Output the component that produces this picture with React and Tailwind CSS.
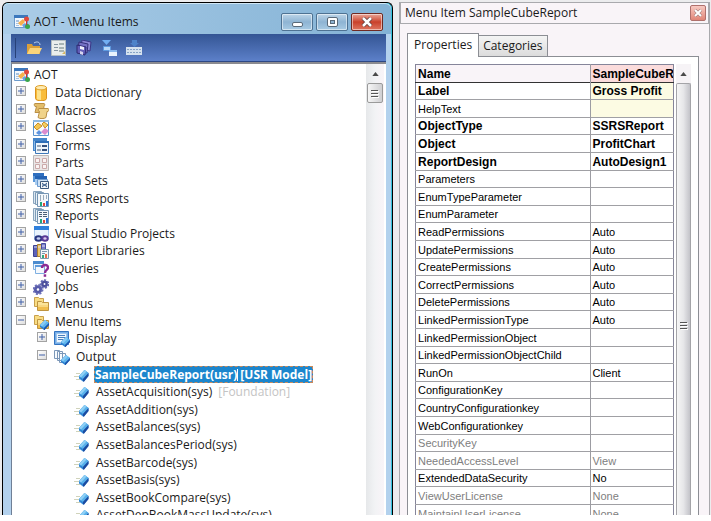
import React, { useState } from "react";

const paper = (
    <g>
        <path d="M0.500 0.500h8v12h-8z" fill="#dbe6f0" stroke="#8aa5be" />
        <path d="M2.500 1.500h8v12h-8z" fill="#e8f0f6" stroke="#7f9db8" />
        <path d="M4.500 2.500h11v13h-11z" fill="#f4f8fb" stroke="#7595b4" />
    </g>
);

const bars = (
    <g>
        <path d="M7 11h2v4H7z" fill="#21a57c" />
        <path d="M10 12h2v3h-2z" fill="#e2453c" />
        <path d="M13 10h2v5h-2z" fill="#2c74d6" />
    </g>
);

const diamond = (
    <g>
        <path d="M12 6l4 3v2l-4.500 5H11l-4-3v-2z" fill="#2b80d0" />
        <path d="M12 6l4 3-5 5-4-3z" fill="#5db4ec" />
        <path d="M12 6l2 1.500L9 12.500 7 11z" fill="#86caf5" />
        <path d="M16 9v2l-4.500 5H11v-2z" fill="#1d55ac" />
    </g>
);

const folder = (
    <g>
        <path d="M1.500 1.500h4l1 1h4v8h-9z" fill="#f8dc83" stroke="#c9a04c" />
        <path d="M4.500 5.500h4l1 1h6v8h-11z" fill="#fbe49a" stroke="#bf9440" />
        <path d="M5 9h10v5H5z" fill="#f0bd4d" />
        <path d="M5 9h10v2H5z" fill="#f8d780" />
    </g>
);

const icons = {
    aot: (
        <g>
            <path d="M0.500 1.500h13v12h-13z" fill="#f3f8fd" stroke="#6c9bcb" />
            <path d="M0 1h14v3H0z" fill="#3c78bd" />
            <path d="M2 6h3v2H2zM2 9h3v1H2zM2 11h3v1H2z" fill="#a7c3e0" />
            <path d="M4 9l5-4 2 3-4 4z" fill="#f5b04c" />
            <circle cx="12.500" cy="5" r="2.500" fill="#e0483a" />
            <path d="M8 11l3-2 2 2-3 3z" fill="#6c9fe0" />
            <circle cx="13.500" cy="12.500" r="2.500" fill="#3aa54b" />
            <path d="M12 7h1v4h-1z" fill="#cf3830" />
        </g>
    ),
    dictionary: (
        <g>
            <path d="M2.500 2.500v11c0 3 11 3 11 0v-11z" fill="#f9bd3c" stroke="#dc941c" />
            <path d="M4 4h4v11c-3 0-4-1-4-1z" fill="#fde28c" />
            <ellipse cx="8" cy="2.700" rx="5.500" ry="2.200" fill="#fdeab0" stroke="#dfa02a" />
        </g>
    ),
    macros: (
        <g stroke="#b98f45">
            <path d="M2 0.500h9c1 0 1 2 0 3l-1 6H2l1.500-6H2c-1-1-1-3 0-3z" fill="#e3bd6a" />
            <path d="M6 5.500h9c1 0 1 2 0 3h-1l-1 6c-2 1.500-6 1.500-8 0l1.500-6H6c-1-1-1-3 0-3z" fill="#f0d38a" />
        </g>
    ),
    classes: (
        <g>
            <path d="M0.500 0.500h15v15h-15z" fill="#f7fafd" stroke="#5c94cf" />
            <path d="M0 0h16v2H0z" fill="#8fb9e2" />
            <path d="M1 7l4-4 4 3-5 4z" fill="#f4c654" stroke="#c98f24" />
            <path d="M9 4l2-2 4 3-3 3z" fill="#f6cf62" stroke="#c98f24" />
            <path d="M8 12l4-4 4 3-4 4z" fill="#dc8ccf" />
            <path d="M3 13l3-3 3 3-3 2z" fill="#5c93e0" />
        </g>
    ),
    forms: (
        <g>
            <path d="M0 0h14v13H0z" fill="#4585ca" />
            <path d="M1 3h2v9H1z" fill="#8fbbe8" />
            <path d="M2.500 3.500h13v12h-13z" fill="#eff5fb" stroke="#3e78b8" />
            <path d="M2 3h14v2H2z" fill="#2f6fb8" />
            <path d="M4 7h4v2H4zM4 11h4v2H4z" fill="#98a6b8" />
            <path d="M9 7h5v2H9zM9 11h5v2H9z" fill="#34507c" />
        </g>
    ),
    parts: (
        <g>
            <path d="M0.500 0.500h15v15h-15z" fill="#e9e6e6" stroke="#bcb8b8" />
            <path d="M2.500 3.500h4v4h-4zM9.500 3.500h4v4h-4zM2.500 9.500h4v4h-4zM9.500 9.500h4v4h-4z" fill="#faf4f4" stroke="#cba9a9" />
        </g>
    ),
    datasets: (
        <g>
            <path d="M0 0h11v9H0z" fill="#5b97d8" />
            <path d="M0 0h11v3H0z" fill="#2f6fc0" />
            <path d="M2 3h12v9H2z" fill="#a8ccf0" />
            <path d="M2 3h12v3H2z" fill="#2463b4" />
            <path d="M4.500 6.500h10v7h-10z" fill="#cfe2f5" stroke="#6c9bd0" />
            <path d="M7.500 8.500h8v7h-8z" fill="#f5f8fa" stroke="#3d5a7d" />
            <path d="M9 10l5 4M14 10l-5 4M9 12h5" stroke="#3a5f8c" />
        </g>
    ),
    ssrs: (
        <g>
            {paper}
            <path d="M7.500 4v6M10.500 4v5M13.500 4v4" stroke="#9aabbc" />
            {bars}
        </g>
    ),
    reports: (
        <g>
            {paper}
            <path d="M6 4.500h3M10 4.500h4M6 6.500h3M10 6.500h4M6 8.500h3M10 8.500h4" stroke="#4b5e75" />
            {bars}
        </g>
    ),
    visualstudio: (
        <g>
            <path d="M1.500 0.500h14v13h-14z" fill="#e9f3fc" stroke="#a9c8ea" />
            <path d="M1 0h15v4H1z" fill="#2f80dc" />
            <ellipse cx="5.500" cy="12.500" rx="3" ry="2.200" fill="#c5cff0" stroke="#27357f" strokeWidth="2" />
            <ellipse cx="12" cy="12.500" rx="2.700" ry="2.200" fill="#d9c9ee" stroke="#583a96" strokeWidth="2" />
        </g>
    ),
    libraries: (
        <g>
            <path d="M0.500 2.500h4v11h-4z" fill="#5d62b8" stroke="#3c4292" />
            <path d="M4.500 1.500h4v12h-4z" fill="#ecc469" stroke="#a97f30" />
            <path d="M8.500 0.500h4v13h-4z" fill="#7a7fc6" stroke="#474da0" />
            <path d="M1 4h3M5 4h3M9 3h3" stroke="#dcdcf4" />
            <path d="M7.500 6.500h8v9h-8z" fill="#f0f5f8" stroke="#7b99ad" />
            <path d="M9 8.500h5M9 10.500h3" stroke="#7d93ad" />
            <path d="M9 12h2v3H9z" fill="#2fa87a" />
            <path d="M12 11h2v4h-2z" fill="#e5704c" />
        </g>
    ),
    queries: (
        <g>
            <path d="M0.500 0.500h10v8h-10z" fill="#eef5fc" stroke="#7fb0e2" />
            <path d="M0 0h11v3H0z" fill="#4c8ccf" />
            <path d="M2.500 4.500h9v8h-9z" fill="#f5f9fd" stroke="#7fb0e2" />
            <path d="M2 4h7v2H2z" fill="#5f9cdc" />
            <path d="M9 7c0-4 6-4 6-0.500 0 2.500-3 2.500-3 5.500" fill="none" stroke="#8c2c94" strokeWidth="2.400" />
            <path d="M10.700 13.300h2.500v2.500h-2.500z" fill="#8c2c94" />
        </g>
    ),
    jobs: (
        <g fill="none">
            <circle cx="5" cy="10.500" r="2.800" stroke="#575baa" strokeWidth="3" />
            <circle cx="5" cy="10.500" r="4.500" stroke="#6d71b9" strokeWidth="2" strokeDasharray="2 1.500" />
            <circle cx="11.500" cy="5" r="2.200" stroke="#4c509c" strokeWidth="2.500" />
            <circle cx="11.500" cy="5" r="3.800" stroke="#6468b2" strokeWidth="2" strokeDasharray="2 1.400" />
        </g>
    ),
    menus: folder,
    menuitems: (
        <g>
            {folder}
            {diamond}
        </g>
    ),
    display: (
        <g>
            <path d="M0.500 0.500h14v13h-14z" fill="#72ace6" stroke="#3373c0" />
            <path d="M2.500 2.500h10v9h-10z" fill="#eef6fd" stroke="#9cc3ec" />
            <path d="M4 4.500h7M4 6.500h7M4 8.500h5" stroke="#4a80bd" />
            {diamond}
        </g>
    ),
    output: (
        <g>
            <path d="M0.500 1.500h5v8h-5zM3.500 2.500h5v9h-5zM5.500 4.500h6v9h-6z" fill="#f7fafd" stroke="#7b97b8" />
            {diamond}
        </g>
    ),
    item: (
        <g>
            <path d="M2 6.500h4M0 9.500h5M2 12.500h4" stroke="#d0d3bb" />
            <path d="M10.500 3l4 3v3L10 14.500H9L5 11.500V9z" fill="#2f86d5" />
            <path d="M10.500 3l4 3L9 12 5 9z" fill="#58b0ea" />
            <path d="M10.500 3l2 1.500L7 10.500 5 9z" fill="#8fd0f6" />
            <path d="M14.500 6v3L10 14.500H9V12z" fill="#1c4ba0" />
        </g>
    ),
    open: (
        <g>
            <path d="M1 4h5l1 2h7v8H1z" fill="#dba03a" />
            <path d="M1 14l3-6h12l-3 6z" fill="#fbd47a" />
            <path d="M8 3c3-2 6-1 6 2" fill="none" stroke="#b9d0ef" />
        </g>
    ),
    properties: (
        <g>
            <path d="M0.500 0.500h14v15h-14z" fill="#e9edec" stroke="#b4bec2" />
            <path d="M3 4.500h4M3 7.500h4M3 10.500h4" stroke="#8494a0" />
            <path d="M8 3h5v2H8zM8 7h5v2H8zM8 10h5v2H8z" fill="#a9b5b4" />
            <path d="M11 14l3-3v3z" fill="#d8b75e" />
        </g>
    ),
    saveall: (
        <g>
            <path d="M6 0l9 2-1 9-9-2z" fill="#8b87d4" stroke="#3b3786" />
            <path d="M3 2l9 2-1 9-9-2z" fill="#7470c4" stroke="#353079" />
            <path d="M1 5l9 2-1 8-8-2z" fill="#625eb8" stroke="#2d2870" />
            <path d="M4 6l4 1v3L4 9z" fill="#f0f0fb" />
            <path d="M4 11l3 1v3l-3-1z" fill="#d5d4ee" />
        </g>
    ),
    transfer: (
        <g>
            <path d="M1 0h9L5.500 5z" fill="#72aef2" />
            <path d="M2.500 6.500h7v4h-7z" fill="#b9d8f8" stroke="#5d9ae0" />
            <path d="M8 10h8v6H8z" fill="#e9f3fd" />
            <path d="M8 10h8v2H8z" fill="#8ab9ee" />
        </g>
    ),
    compile: (
        <g>
            <path d="M6 0h5v3h2L8.500 7 4 3h2z" fill="#4e83c9" />
            <path d="M0 7h16v8H0z" fill="#d6e2ee" />
            <path d="M1 9.500h14M1 12.500h14" stroke="#86a3c6" strokeDasharray="2 1" />
        </g>
    ),
};

const Icon = ({ name }) => (
    <svg viewBox="0 0 16 16" className="h-4 w-4 shrink-0" aria-hidden="true">
        {icons[name]}
    </svg>
);

const treeItems = [
    { level: 0, icon: "aot", label: "AOT" },
    { level: 1, icon: "dictionary", label: "Data Dictionary", sign: "+" },
    { level: 1, icon: "macros", label: "Macros", sign: "+" },
    { level: 1, icon: "classes", label: "Classes", sign: "+" },
    { level: 1, icon: "forms", label: "Forms", sign: "+" },
    { level: 1, icon: "parts", label: "Parts", sign: "+" },
    { level: 1, icon: "datasets", label: "Data Sets", sign: "+" },
    { level: 1, icon: "ssrs", label: "SSRS Reports", sign: "+" },
    { level: 1, icon: "reports", label: "Reports", sign: "+" },
    { level: 1, icon: "visualstudio", label: "Visual Studio Projects", sign: "+" },
    { level: 1, icon: "libraries", label: "Report Libraries", sign: "+" },
    { level: 1, icon: "queries", label: "Queries", sign: "+" },
    { level: 1, icon: "jobs", label: "Jobs", sign: "+" },
    { level: 1, icon: "menus", label: "Menus", sign: "+" },
    { level: 1, icon: "menuitems", label: "Menu Items", sign: "-" },
    { level: 2, icon: "display", label: "Display", sign: "+" },
    { level: 2, icon: "output", label: "Output", sign: "-" },
    { level: 3, icon: "item", label: "SampleCubeReport(usr)", model: "[USR Model]" },
    { level: 3, icon: "item", label: "AssetAcquisition(sys)", model: "[Foundation]" },
    { level: 3, icon: "item", label: "AssetAddition(sys)" },
    { level: 3, icon: "item", label: "AssetBalances(sys)" },
    { level: 3, icon: "item", label: "AssetBalancesPeriod(sys)" },
    { level: 3, icon: "item", label: "AssetBarcode(sys)" },
    { level: 3, icon: "item", label: "AssetBasis(sys)" },
    { level: 3, icon: "item", label: "AssetBookCompare(sys)" },
    { level: 3, icon: "item", label: "AssetDepBookMassUpdate(sys)" },
];

const indent = ["pl-[2px] gap-1", "pl-1 gap-[6px]", "pl-[25px] gap-[6px]", "pl-[62px] gap-1"];

const properties = [
    { name: "Name", value: "SampleCubeR", bold: true, cell: "bg-[#fbdcdc]" },
    { name: "Label", value: "Gross Profit", bold: true, cell: "bg-[#fcfbe3]" },
    { name: "HelpText", value: "", cell: "bg-[#fcfbe3]" },
    { name: "ObjectType", value: "SSRSReport", bold: true },
    { name: "Object", value: "ProfitChart", bold: true },
    { name: "ReportDesign", value: "AutoDesign1", bold: true },
    { name: "Parameters", value: "" },
    { name: "EnumTypeParameter", value: "" },
    { name: "EnumParameter", value: "" },
    { name: "ReadPermissions", value: "Auto" },
    { name: "UpdatePermissions", value: "Auto" },
    { name: "CreatePermissions", value: "Auto" },
    { name: "CorrectPermissions", value: "Auto" },
    { name: "DeletePermissions", value: "Auto" },
    { name: "LinkedPermissionType", value: "Auto" },
    { name: "LinkedPermissionObject", value: "" },
    { name: "LinkedPermissionObjectChild", value: "" },
    { name: "RunOn", value: "Client" },
    { name: "ConfigurationKey", value: "" },
    { name: "CountryConfigurationkey", value: "" },
    { name: "WebConfigurationkey", value: "" },
    { name: "SecurityKey", value: "", disabled: true },
    { name: "NeededAccessLevel", value: "View", disabled: true },
    { name: "ExtendedDataSecurity", value: "No" },
    { name: "ViewUserLicense", value: "None", disabled: true },
    { name: "MaintainUserLicense", value: "None", disabled: true },
];

const Arrow = () => (
    <svg viewBox="0 0 8 5" className="h-1 w-[7px]" aria-hidden="true">
        <path d="M4 0l4 5H0z" fill="#4a4a4a" />
    </svg>
);

const Grip = () => (
    <svg viewBox="0 0 8 9" className="h-[9px] w-2" aria-hidden="true">
        <path d="M0 1.500h7M0 4.500h7M0 7.500h7" stroke="#555" />
        <path d="M1 2.500h7M1 5.500h7M1 8.500h7" stroke="#fff" />
    </svg>
);

const WindowButton = ({ label, className, children }) => (
    <button
        type="button"
        aria-label={label}
        className={`flex h-[18px] w-8 items-center justify-center rounded-xs border shadow-[inset_0_0_0_1px_#ffffff80] ${className}`}
    >
        {children}
    </button>
);

const TreeRow = ({ item, selected, onSelect }) => (
    <li className={`flex h-[18px] items-center nth-[5n+3]:h-[17px] nth-[5n+5]:h-[17px] ${indent[item.level]}`}>
        {item.sign && (
            <button
                type="button"
                aria-label={`${item.sign === "+" ? "Expand" : "Collapse"} ${item.label}`}
                className="mr-px mb-1 flex h-[10px] w-[10px] shrink-0 items-center justify-center border border-[#a3a3a3] bg-linear-to-br from-white to-[#dedede]"
            >
                <svg viewBox="0 0 8 8" className="h-2 w-2">
                    <path d={item.sign === "+" ? "M1 4h6M4 1v6" : "M1 4h6"} stroke="#4060a8" />
                </svg>
            </button>
        )}
        <Icon name={item.icon} />
        {selected ? (
            <button
                type="button"
                className="flex h-[17px] items-center border border-dashed border-[#c98a5c] bg-[#1c86cd] text-[12px] leading-none font-bold whitespace-nowrap text-white"
            >
                <span>{item.label}</span>
                <span className="border-l border-white pl-[2px]">{item.model}</span>
            </button>
        ) : (
            <button
                type="button"
                onClick={onSelect}
                className={`text-[12px] leading-none whitespace-nowrap ${item.level === 3 ? "pl-[2px]" : ""}`}
            >
                {item.label}
                {item.model && <span className="pl-[6px] text-[#c4c4c4]">{item.model}</span>}
            </button>
        )}
    </li>
);

const AotWindow = () => {
    const [selected, setSelected] = useState("SampleCubeReport(usr)");

    return (
        <section className="ml-[2px] flex w-[55%] min-w-0 flex-col rounded-t-md border border-b-0 border-black bg-[#b3d1ed] pr-[6px] pl-2 shadow-[inset_-1px_1px_0_#35c3dc]">
            <header className="mr-[-5px] -ml-2 flex h-[31px] shrink-0 items-center gap-1 rounded-t-md border-t border-[#cfe6f5] bg-linear-to-r from-[#abcde8] to-[#83b2d5] pt-[6px] pr-2 pl-[11px]">
                <Icon name="aot" />
                <h1 className="flex-1 text-[12px] leading-none whitespace-nowrap">AOT - \Menu Items</h1>
                <div className="flex gap-[3px]">
                    <WindowButton label="Minimize" className="border-[#4e7292] bg-linear-to-b from-[#bdd5e8] via-[#8eb4d3] to-[#a8cbe4]">
                        <span className="mt-1 h-[5px] w-[11px] rounded-xs border border-[#596a79] bg-white" />
                    </WindowButton>
                    <WindowButton label="Maximize" className="border-[#4e7292] bg-linear-to-b from-[#bdd5e8] via-[#8eb4d3] to-[#a8cbe4]">
                        <span className="flex h-[10px] w-[11px] items-center justify-center rounded-xs border border-[#596a79] bg-white">
                            <span className="h-1 w-[5px] border border-[#596a79] bg-[#8eb4d3]" />
                        </span>
                    </WindowButton>
                    <WindowButton label="Close" className="border-[#702a22] bg-linear-to-b from-[#e9a699] via-[#c9402a] to-[#dd7560]">
                        <svg viewBox="0 0 12 10" className="h-[10px] w-3">
                            <path d="M2 1l8 8M10 1L2 9" stroke="#5b3b3b" strokeWidth="4" />
                            <path d="M2 1l8 8M10 1L2 9" stroke="#fff" strokeWidth="2.500" />
                        </svg>
                    </WindowButton>
                </div>
            </header>
            <div className="flex h-7 shrink-0 items-center border-b border-[#2d4885] bg-linear-to-b from-[#345594] to-[#5c80c9] pl-1">
                <span className="mr-[10px] h-5 w-px bg-[#274179]" />
                <div className="flex gap-[9px]">
                    {["open", "properties", "saveall", "transfer", "compile"].map((name) => (
                        <button type="button" key={name} aria-label={name}>
                            <Icon name={name} />
                        </button>
                    ))}
                </div>
            </div>
            <div className="flex min-h-0 flex-1 border-t-2 border-l border-t-[#8b8b90] border-l-[#6f7f96] bg-white">
                <ul className="min-w-0 flex-1 overflow-hidden pt-[2px]">
                    {treeItems.map((item) => (
                        <TreeRow
                            key={item.label}
                            item={item}
                            selected={item.label === selected}
                            onSelect={() => setSelected(item.label)}
                        />
                    ))}
                </ul>
                <div className="mr-[2px] flex w-[18px] shrink-0 flex-col items-center bg-linear-to-r from-[#e6e8ea] via-[#f2f3f5] to-[#f9f4f8]">
                    <span className="flex h-[19px] items-center">
                        <Arrow />
                    </span>
                    <span className="flex h-5 w-4 items-center justify-center rounded-xs border border-[#9a9a9a] bg-linear-to-r from-[#f6f6f6] to-[#cfcfd2]">
                        <Grip />
                    </span>
                </div>
            </div>
        </section>
    );
};

const PropertyRow = ({ row, first }) => (
    <tr
        className={`h-[18px] border-b nth-[5n+2]:h-[17px] nth-[5n+4]:h-[17px] ${first ? "border-[#333] bg-[#f9f4f8]" : "border-[#a0a0a4]"} ${row.disabled ? "text-[#808080]" : "text-black"}`}
    >
        <th
            scope="row"
            className={`overflow-hidden border-r border-[#9c9ca2] p-0 pl-[2px] text-left leading-4 whitespace-nowrap ${row.bold ? "text-[12px] font-bold" : "text-[11px] font-normal"}`}
        >
            {row.name}
        </th>
        <td
            className={`overflow-hidden p-0 pl-px leading-4 whitespace-nowrap ${row.cell || ""} ${row.bold ? "text-[12px] font-bold" : "text-[11px]"}`}
        >
            {row.value}
        </td>
    </tr>
);

const PropertiesPane = () => {
    const [tab, setTab] = useState("Properties");

    return (
        <section className="mr-px ml-[6px] flex min-w-0 flex-1 flex-col border-x border-[#a9a9ad] bg-[#f9f4f8]">
            <header className="flex h-[22px] shrink-0 items-center border border-[#a9a9ad] pr-[2px] pl-1">
                <h2 className="flex-1 text-[12px] leading-none whitespace-nowrap">Menu Item SampleCubeReport</h2>
                <button
                    type="button"
                    aria-label="Close properties"
                    className="flex h-4 w-4 items-center justify-center rounded-xs border border-[#b0706c] bg-linear-to-b from-[#f7c9c2] to-[#e08577]"
                >
                    <svg viewBox="0 0 8 8" className="h-2 w-2">
                        <path d="M1 1l6 6M7 1L1 7" stroke="#8d7474" strokeWidth="3" />
                        <path d="M1 1l6 6M7 1L1 7" stroke="#fff" strokeWidth="2" />
                    </svg>
                </button>
            </header>
            <div role="tablist" className="mt-[9px] ml-[7px] flex shrink-0 items-end">
                {["Properties", "Categories"].map((name) => (
                    <button
                        type="button"
                        role="tab"
                        key={name}
                        aria-selected={tab === name}
                        onClick={() => setTab(name)}
                        className={
                            tab === name
                                ? "relative z-10 -mb-px h-6 border border-b-0 border-[#8c8e94] bg-white px-[6px] pb-[2px] text-[12px] leading-none"
                                : "h-[21px] border border-b-0 border-l-0 border-[#8c8e94] bg-linear-to-b from-[#f4f4f4] to-[#dcdcdc] px-1 text-[12px] leading-none"
                        }
                    >
                        {name}
                    </button>
                ))}
            </div>
            <div className="mr-[10px] ml-[7px] flex min-h-0 flex-1 items-stretch overflow-hidden border border-b-0 border-[#8c8e94] bg-white pt-[7px] pr-[7px] pl-[7px]">
                <div className="min-w-0 flex-1 overflow-hidden">
                    <table className="w-full table-fixed border-collapse border border-[#85859a] font-['Liberation_Sans',sans-serif]">
                        <colgroup>
                            <col className="w-[68%]" />
                            <col />
                        </colgroup>
                        <tbody>
                            {properties.map((row, i) => (
                                <PropertyRow key={row.name} row={row} first={i === 0} />
                            ))}
                        </tbody>
                    </table>
                </div>
                <div className="ml-[2px] flex w-[15px] shrink-0 flex-col items-center bg-[#f6f3f6]">
                    <span className="flex h-[19px] shrink-0 items-center">
                        <Arrow />
                    </span>
                    <span className="flex w-full flex-1 items-start justify-center rounded-t-xs border border-b-0 border-[#a4a4a8] bg-linear-to-r from-[#f6f6f6] via-[#e6e6e9] to-[#c3c3c9] pt-[237px]">
                        <Grip />
                    </span>
                </div>
            </div>
        </section>
    );
};

export default function App() {
    return (
        <main className="h-screen overflow-hidden bg-white pb-[6px] font-['Open_Sans',sans-serif] text-[#1a1a1a]">
            <div className="flex h-full bg-[#ececee] pt-[2px]">
                <AotWindow />
                <PropertiesPane />
            </div>
        </main>
    );
}
